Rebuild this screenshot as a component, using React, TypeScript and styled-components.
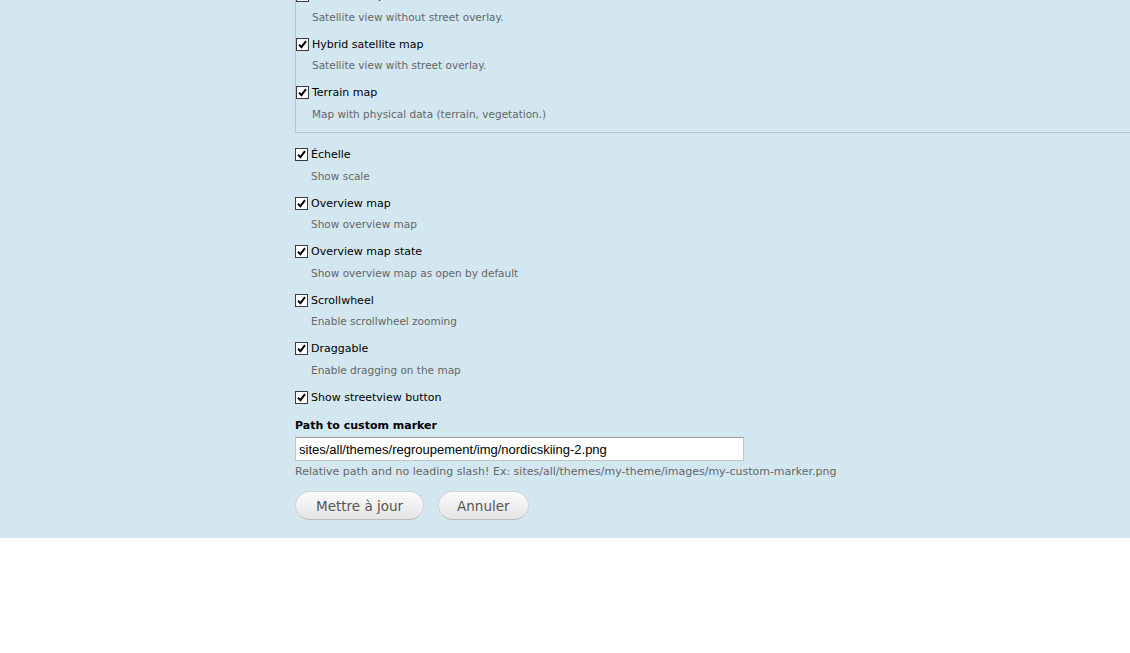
import styled, { createGlobalStyle } from 'styled-components'

const GlobalStyle = createGlobalStyle`
  html, body {
    margin: 0;
    padding: 0;
    background: #ffffff;
  }
  body {
    font-family: "DejaVu Sans", Verdana, sans-serif;
  }
`

const Page = styled.div`
  background: #d3e7f0;
  height: 538px;
  overflow: hidden;
  padding-left: 295px;
  box-sizing: border-box;
`

const Content = styled.div`
  margin-top: -14.5px;
  display: flex;
  flex-direction: column;
`

const Fieldset = styled.div`
  border-left: 1px solid #b8c6cc;
  border-bottom: 1px solid #b8c6cc;
  padding-bottom: 0.5px;
  margin-bottom: 12px;
`

const Item = styled.div`
  display: flex;
  flex-direction: column;
  padding-bottom: 4.5px;
`

const LabelRow = styled.label`
  display: flex;
  align-items: center;
  gap: 3px;
  height: 20px;
  font-size: 11px;
  color: #000;
  cursor: pointer;
`

const Box = styled.span`
  width: 11px;
  height: 11px;
  border: 1px solid #3b3b3b;
  background: #fff;
  display: inline-flex;
  align-items: center;
  justify-content: center;
  flex: none;
`

const Description = styled.div`
  font-size: 10.5px;
  color: #666;
  padding-left: 16px;
  height: 24px;
  line-height: 22px;
`

const FieldLabel = styled.div`
  font-size: 11px;
  font-weight: bold;
  color: #000;
  margin-top: 6.5px;
  height: 16px;
  line-height: 16px;
`

const TextInput = styled.input`
  width: 449px;
  height: 24px;
  box-sizing: border-box;
  border: 1px solid #c4c4c4;
  border-top-color: #9a9a9a;
  background: #fff;
  font-family: "Liberation Sans", Arial, sans-serif;
  font-size: 13px;
  padding: 0 3px;
  color: #000;
  margin: 3px 0 0 0;
  outline: none;
`

const Help = styled.div`
  font-size: 11px;
  color: #666;
  height: 14px;
  line-height: 14px;
  margin-top: 4px;
`

const Actions = styled.div`
  display: flex;
  gap: 14px;
  margin-top: 12px;
`

const Button = styled.button<{ $pad?: number }>`
  height: 29px;
  padding: 0 ${({ $pad }) => $pad ?? 20}px;
  border: 1px solid #d4d4d4;
  border-bottom-color: #bdbdbd;
  border-radius: 15px;
  background: linear-gradient(#fbfbfb, #e4e4e4);
  font-family: "DejaVu Sans", Verdana, sans-serif;
  font-size: 13.5px;
  color: #555;
  cursor: pointer;
`

function Check() {
  return (
    <Box>
      <svg width="9" height="9" viewBox="0 0 9 9">
        <path d="M1 4.6 L3.4 7.2 L8 1.2" fill="none" stroke="#000" strokeWidth="1.9" />
      </svg>
    </Box>
  )
}

type Opt = { label: string; desc?: string }

const mapTypes: Opt[] = [
  { label: 'Satellite map', desc: 'Satellite view without street overlay.' },
  { label: 'Hybrid satellite map', desc: 'Satellite view with street overlay.' },
  { label: 'Terrain map', desc: 'Map with physical data (terrain, vegetation.)' },
]

const options: Opt[] = [
  { label: 'Échelle', desc: 'Show scale' },
  { label: 'Overview map', desc: 'Show overview map' },
  { label: 'Overview map state', desc: 'Show overview map as open by default' },
  { label: 'Scrollwheel', desc: 'Enable scrollwheel zooming' },
  { label: 'Draggable', desc: 'Enable dragging on the map' },
  { label: 'Show streetview button' },
]

function Option({ label, desc }: Opt) {
  return (
    <Item>
      <LabelRow>
        <Check />
        {label}
      </LabelRow>
      {desc && <Description>{desc}</Description>}
    </Item>
  )
}

export default function App() {
  return (
    <>
      <GlobalStyle />
      <Page>
        <Content>
          <Fieldset>
            {mapTypes.map((o) => (
              <Option key={o.label} {...o} />
            ))}
          </Fieldset>
          {options.map((o) => (
            <Option key={o.label} {...o} />
          ))}
          <FieldLabel>Path to custom marker</FieldLabel>
          <TextInput defaultValue="sites/all/themes/regroupement/img/nordicskiing-2.png" />
          <Help>Relative path and no leading slash! Ex: sites/all/themes/my-theme/images/my-custom-marker.png</Help>
          <Actions>
            <Button type="button">Mettre à jour</Button>
            <Button type="button" $pad={18}>Annuler</Button>
          </Actions>
        </Content>
      </Page>
    </>
  )
}
